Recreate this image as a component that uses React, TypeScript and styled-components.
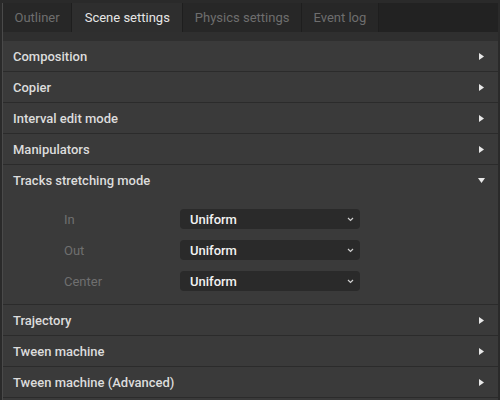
import React from "react";
import styled, { createGlobalStyle } from "styled-components";

const Global = createGlobalStyle`
  html, body { margin: 0; padding: 0; background: #2a2a2a; }
  body { font-family: Roboto, "Liberation Sans", sans-serif; }
`;

const Frame = styled.div`
  width: 500px;
  height: 400px;
  box-sizing: border-box;
  padding: 3px 2px 0 2px;
  background: #2a2a2a;
  overflow: hidden;
`;

const Panel = styled.div`
  border-left: 1px solid #4a4a4a;
  height: 100%;
  display: flex;
  flex-direction: column;
`;

const TabBar = styled.div`
  display: flex;
  height: 29px;
  background: #222222;
`;

const Tab = styled.div<{ $active?: boolean }>`
  display: flex;
  align-items: center;
  padding: 0 ${(p) => (p.$active ? "12.5px" : "11.5px")};
  font-size: 13px;
  color: ${(p) => (p.$active ? "#e6e6e6" : "#6e6e6e")};
  background: ${(p) => (p.$active ? "#2e2e2e" : "#272727")};
  border-right: 1px solid #1e1e1e;
`;

const Gap = styled.div`
  height: 9px;
  background: #2f2f2f;
`;

const List = styled.div`
  flex: 1;
  background: #3a3a3a;
`;

const Row = styled.div<{ $open?: boolean }>`
  display: flex;
  align-items: center;
  justify-content: space-between;
  height: 30px;
  padding: 0 13px 0 10px;
  border-bottom: ${(p) => (p.$open ? "none" : "1px solid #2b2b2b")};
  font-size: 13px;
  font-weight: 500;
  color: #dcdcdc;
`;

const Section = styled.div`
  border-bottom: 1px solid #2b2b2b;
`;

const Body = styled.div`
  padding: 14px 0 13px 0;
  display: flex;
  flex-direction: column;
  gap: 11px;
`;

const Field = styled.div`
  display: grid;
  grid-template-columns: 177px 180px;
  align-items: center;
  height: 20px;
`;

const Label = styled.div`
  padding-left: 61px;
  font-size: 13px;
  color: #6f6f6f;
`;

const Select = styled.div`
  display: flex;
  align-items: center;
  justify-content: space-between;
  height: 20px;
  border-radius: 4px;
  background: #2a2a2a;
  padding: 0 6px 0 10px;
  font-size: 13px;
  font-weight: 500;
  color: #f2f2f2;
`;

const Arrow = ({ down }: { down?: boolean }) => (
  <svg width="7" height="7" viewBox="0 0 7 7">
    {down ? (
      <polygon points="0,1 7,1 3.5,6" fill="#e8e8e8" />
    ) : (
      <polygon points="1,0 6,3.5 1,7" fill="#e8e8e8" />
    )}
  </svg>
);

const Chevron = () => (
  <svg width="7" height="5" viewBox="0 0 7 5">
    <polyline points="1,1 3.5,3.5 6,1" fill="none" stroke="#cfcfcf" strokeWidth="1.2" />
  </svg>
);

const before = ["Composition", "Copier", "Interval edit mode", "Manipulators"];
const after = ["Trajectory", "Tween machine", "Tween machine (Advanced)"];

export default function App() {
  return (
    <Frame>
      <Global />
      <Panel>
        <TabBar>
          <Tab>Outliner</Tab>
          <Tab $active>Scene settings</Tab>
          <Tab>Physics settings</Tab>
          <Tab>Event log</Tab>
        </TabBar>
        <Gap />
        <List>
          {before.map((t) => (
            <Row key={t}>
              {t}
              <Arrow />
            </Row>
          ))}
          <Section>
            <Row $open>
              Tracks stretching mode
              <Arrow down />
            </Row>
            <Body>
              {["In", "Out", "Center"].map((l) => (
                <Field key={l}>
                  <Label>{l}</Label>
                  <Select>
                    Uniform
                    <Chevron />
                  </Select>
                </Field>
              ))}
            </Body>
          </Section>
          {after.map((t) => (
            <Row key={t}>
              {t}
              <Arrow />
            </Row>
          ))}
        </List>
      </Panel>
    </Frame>
  );
}
